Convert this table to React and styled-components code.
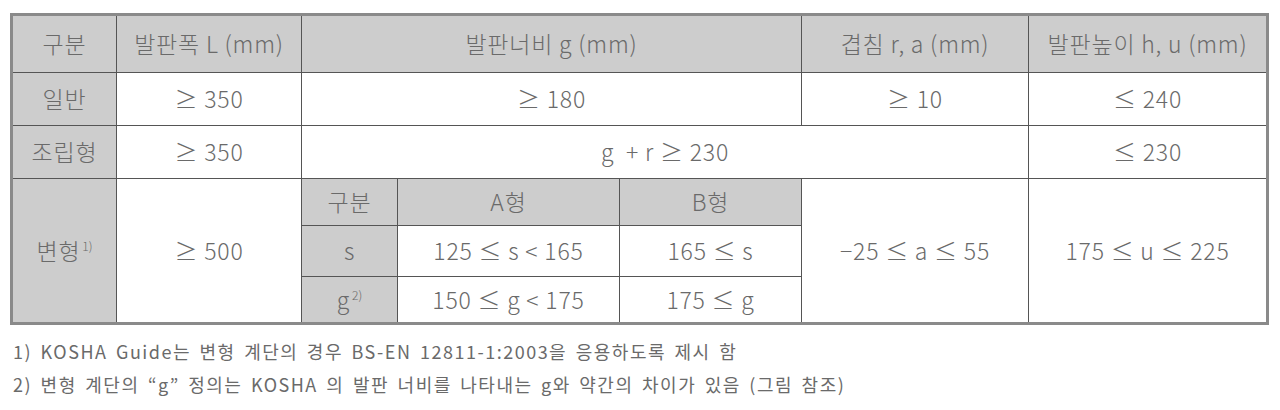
import React from "react";
import styled, { createGlobalStyle } from "styled-components";

const Global = createGlobalStyle`
  html, body { margin: 0; padding: 0; background: #ffffff; }
  body { font-family: "Noto Sans CJK KR", "Noto Sans", sans-serif; color: #6a6a6a; }
`;

const Page = styled.div`
  padding: 13px 14px 0 10px;
`;

const Table = styled.table`
  width: 1256px;
  table-layout: fixed;
  border-collapse: collapse;
  border: 3px solid #8a8a8a;
  font-size: 23px;
  font-weight: 300;
  letter-spacing: 0.8px;
  color: #6a6a6a;
`;

const Cell = styled.td`
  height: ${(p) => p.$h || 52}px;
  padding: 0;
  text-align: center;
  vertical-align: middle;
  border: 1px solid #555555;
  background: ${(p) => (p.$shade ? "#cdcdcd" : "#ffffff")};
  white-space: nowrap;
  line-height: 1.2;
`;

const Head = styled(Cell).attrs({ as: "th" })`
  font-weight: 300;
  background: #cdcdcd;
`;

const Sup = styled.sup`
  font-size: 12px;
  vertical-align: 9px;
  line-height: 0;
  margin-left: 2px;
  letter-spacing: 0;
`;

const Notes = styled.div`
  margin-top: 10px;
  padding-left: 3px;
  font-size: 18px;
  line-height: 33px;
  letter-spacing: 1.5px;
  word-spacing: 3px;
  color: #6a6a6a;
`;

const Note = styled.p`
  margin: 0;
  white-space: nowrap;
`;

const widths = [105, 185, 96, 222, 182, 227, 239];

export default function App() {
  return (
    <>
      <Global />
      <Page>
        <Table>
          <colgroup>
            {widths.map((w, i) => (
              <col key={i} style={{ width: w }} />
            ))}
          </colgroup>
          <thead>
            <tr>
              <Head $h={56}>구분</Head>
              <Head $h={56}>발판폭 L (mm)</Head>
              <Head $h={56} colSpan={3}>발판너비 g (mm)</Head>
              <Head $h={56}>겹침 r, a (mm)</Head>
              <Head $h={56}>발판높이 h, u (mm)</Head>
            </tr>
          </thead>
          <tbody>
            <tr>
              <Cell $shade>일반</Cell>
              <Cell>≥ 350</Cell>
              <Cell colSpan={3}>≥ 180</Cell>
              <Cell>≥ 10</Cell>
              <Cell>≤ 240</Cell>
            </tr>
            <tr>
              <Cell $shade>조립형</Cell>
              <Cell>≥ 350</Cell>
              <Cell colSpan={4}>g&nbsp; + r ≥ 230</Cell>
              <Cell>≤ 230</Cell>
            </tr>
            <tr>
              <Cell $shade rowSpan={3}>
                변형<Sup>1)</Sup>
              </Cell>
              <Cell rowSpan={3}>≥ 500</Cell>
              <Cell $shade $h={46}>구분</Cell>
              <Cell $shade $h={46}>A형</Cell>
              <Cell $shade $h={46}>B형</Cell>
              <Cell rowSpan={3}>−25 ≤ a ≤ 55</Cell>
              <Cell rowSpan={3}>175 ≤ u ≤ 225</Cell>
            </tr>
            <tr>
              <Cell $shade $h={50}>s</Cell>
              <Cell $h={50}>125 ≤ s &lt; 165</Cell>
              <Cell $h={50}>165 ≤ s</Cell>
            </tr>
            <tr>
              <Cell $shade $h={45}>
                g<Sup>2)</Sup>
              </Cell>
              <Cell $h={45}>150 ≤ g &lt; 175</Cell>
              <Cell $h={45}>175 ≤ g</Cell>
            </tr>
          </tbody>
        </Table>
        <Notes>
          <Note>1) KOSHA Guide는 변형 계단의 경우 BS-EN 12811-1:2003을 응용하도록 제시 함</Note>
          <Note>2) 변형 계단의 “g” 정의는 KOSHA 의 발판 너비를 나타내는 g와 약간의 차이가 있음 (그림 참조)</Note>
        </Notes>
      </Page>
    </>
  );
}
